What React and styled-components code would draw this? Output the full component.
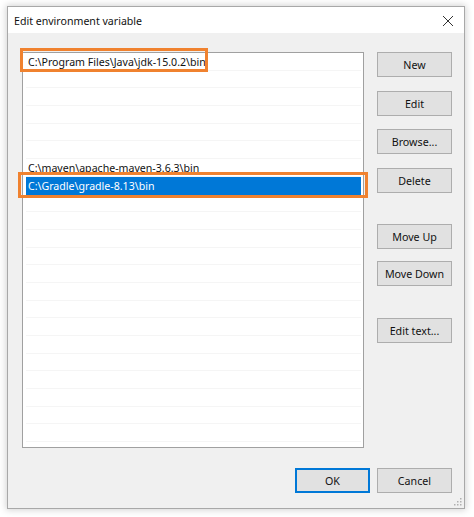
import React from "react";
import styled, { createGlobalStyle } from "styled-components";

const Global = createGlobalStyle`
  html, body { margin: 0; padding: 0; background: #ffffff; }
  body { font-family: "Noto Sans", "Open Sans", sans-serif; }
  * { box-sizing: border-box; }
`;

const Page = styled.div`
  width: 474px;
  height: 517px;
  padding: 6px 0 0 7px;
`;

const Window = styled.div`
  width: 458px;
  height: 503px;
  border: 1px solid #a8a8a8;
  background: #f0f0f0;
  box-shadow: 0 0 7px 1px rgba(0, 0, 0, 0.18);
  display: flex;
  flex-direction: column;
  position: relative;
`;

const TitleBar = styled.div`
  height: 26px;
  background: #ffffff;
  display: flex;
  align-items: center;
  justify-content: space-between;
  padding: 1px 10px 0 6px;
  font-size: 10.6px;
  color: #111;
`;

const Close = styled.svg`
  width: 12px;
  height: 12px;
`;

const Body = styled.div`
  flex: 1;
  display: flex;
  flex-direction: column;
  padding: 19px 12px 15px 14px;
`;

const Main = styled.div`
  display: flex;
  gap: 13px;
  align-items: flex-start;
`;

const ListWrap = styled.div`
  position: relative;
  width: 342px;
  height: 396px;
`;

const List = styled.div`
  width: 100%;
  height: 100%;
  background: #ffffff;
  border: 1px solid #a0a0a0;
  overflow: hidden;
  padding: 0 2px 0 3px;
`;

const Row = styled.div`
  height: 17.7px;
  display: flex;
  align-items: center;
  padding: 1px 0 0 2px;
  font-size: 10.6px;
  white-space: nowrap;
  color: ${(p) => (p.$selected ? "#ffffff" : "#111")};
  background: ${(p) => (p.$selected ? "#0078d7" : "transparent")};
  border-bottom: 1px solid ${(p) => (p.$selected ? "#0078d7" : "#f5f5f5")};
`;

const Highlight = styled.div`
  position: absolute;
  border: 3px solid #f0822f;
  pointer-events: none;
`;

const Buttons = styled.div`
  display: flex;
  flex-direction: column;
`;

const Button = styled.button`
  width: 75px;
  height: 25px;
  margin-top: ${(p) => p.$gap || 0}px;
  background: #e1e1e1;
  border: 1px solid ${(p) => (p.$primary ? "#0078d7" : "#adadad")};
  box-shadow: ${(p) => (p.$primary ? "inset 0 0 0 1px #0078d7" : "none")};
  font-family: "Noto Sans", "Open Sans", sans-serif;
  font-size: 10.7px;
  color: #111;
  padding: 0;
`;

const Footer = styled.div`
  margin-top: auto;
  display: flex;
  justify-content: flex-end;
  gap: 7px;
`;

const Grip = styled.svg`
  position: absolute;
  right: 2px;
  bottom: 2px;
  width: 10px;
  height: 10px;
`;

const rows = [
  "C:\\Program Files\\Java\\jdk-15.0.2\\bin",
  "",
  "",
  "",
  "",
  "",
  "C:\\maven\\apache-maven-3.6.3\\bin",
  "C:\\Gradle\\gradle-8.13\\bin",
];
while (rows.length < 23) rows.push("");

export default function App() {
  return (
    <>
      <Global />
      <Page>
        <Window>
          <TitleBar>
            <span>Edit environment variable</span>
            <Close viewBox="0 0 12 12">
              <path d="M1 1 L11 11 M11 1 L1 11" stroke="#333" strokeWidth="1" />
            </Close>
          </TitleBar>
          <Body>
            <Main>
              <ListWrap>
                <List>
                  {rows.map((r, i) => (
                    <Row key={i} $selected={i === 7}>
                      {r}
                    </Row>
                  ))}
                </List>
                <Highlight style={{ left: -2, top: -4, width: 188, height: 24 }} />
                <Highlight style={{ left: -4, top: 120, width: 350, height: 26 }} />
              </ListWrap>
              <Buttons>
                <Button>New</Button>
                <Button $gap={14}>Edit</Button>
                <Button $gap={13}>Browse...</Button>
                <Button $gap={14}>Delete</Button>
                <Button $gap={31}>Move Up</Button>
                <Button $gap={12}>Move Down</Button>
                <Button $gap={32}>Edit text...</Button>
              </Buttons>
            </Main>
            <Footer>
              <Button $primary>OK</Button>
              <Button>Cancel</Button>
            </Footer>
          </Body>
          <Grip viewBox="0 0 10 10">
            {[
              [8, 2],
              [8, 5],
              [5, 5],
              [8, 8],
              [5, 8],
              [2, 8],
            ].map(([x, y], i) => (
              <rect key={i} x={x} y={y} width="1.5" height="1.5" fill="#b0b0b0" />
            ))}
          </Grip>
        </Window>
      </Page>
    </>
  );
}
